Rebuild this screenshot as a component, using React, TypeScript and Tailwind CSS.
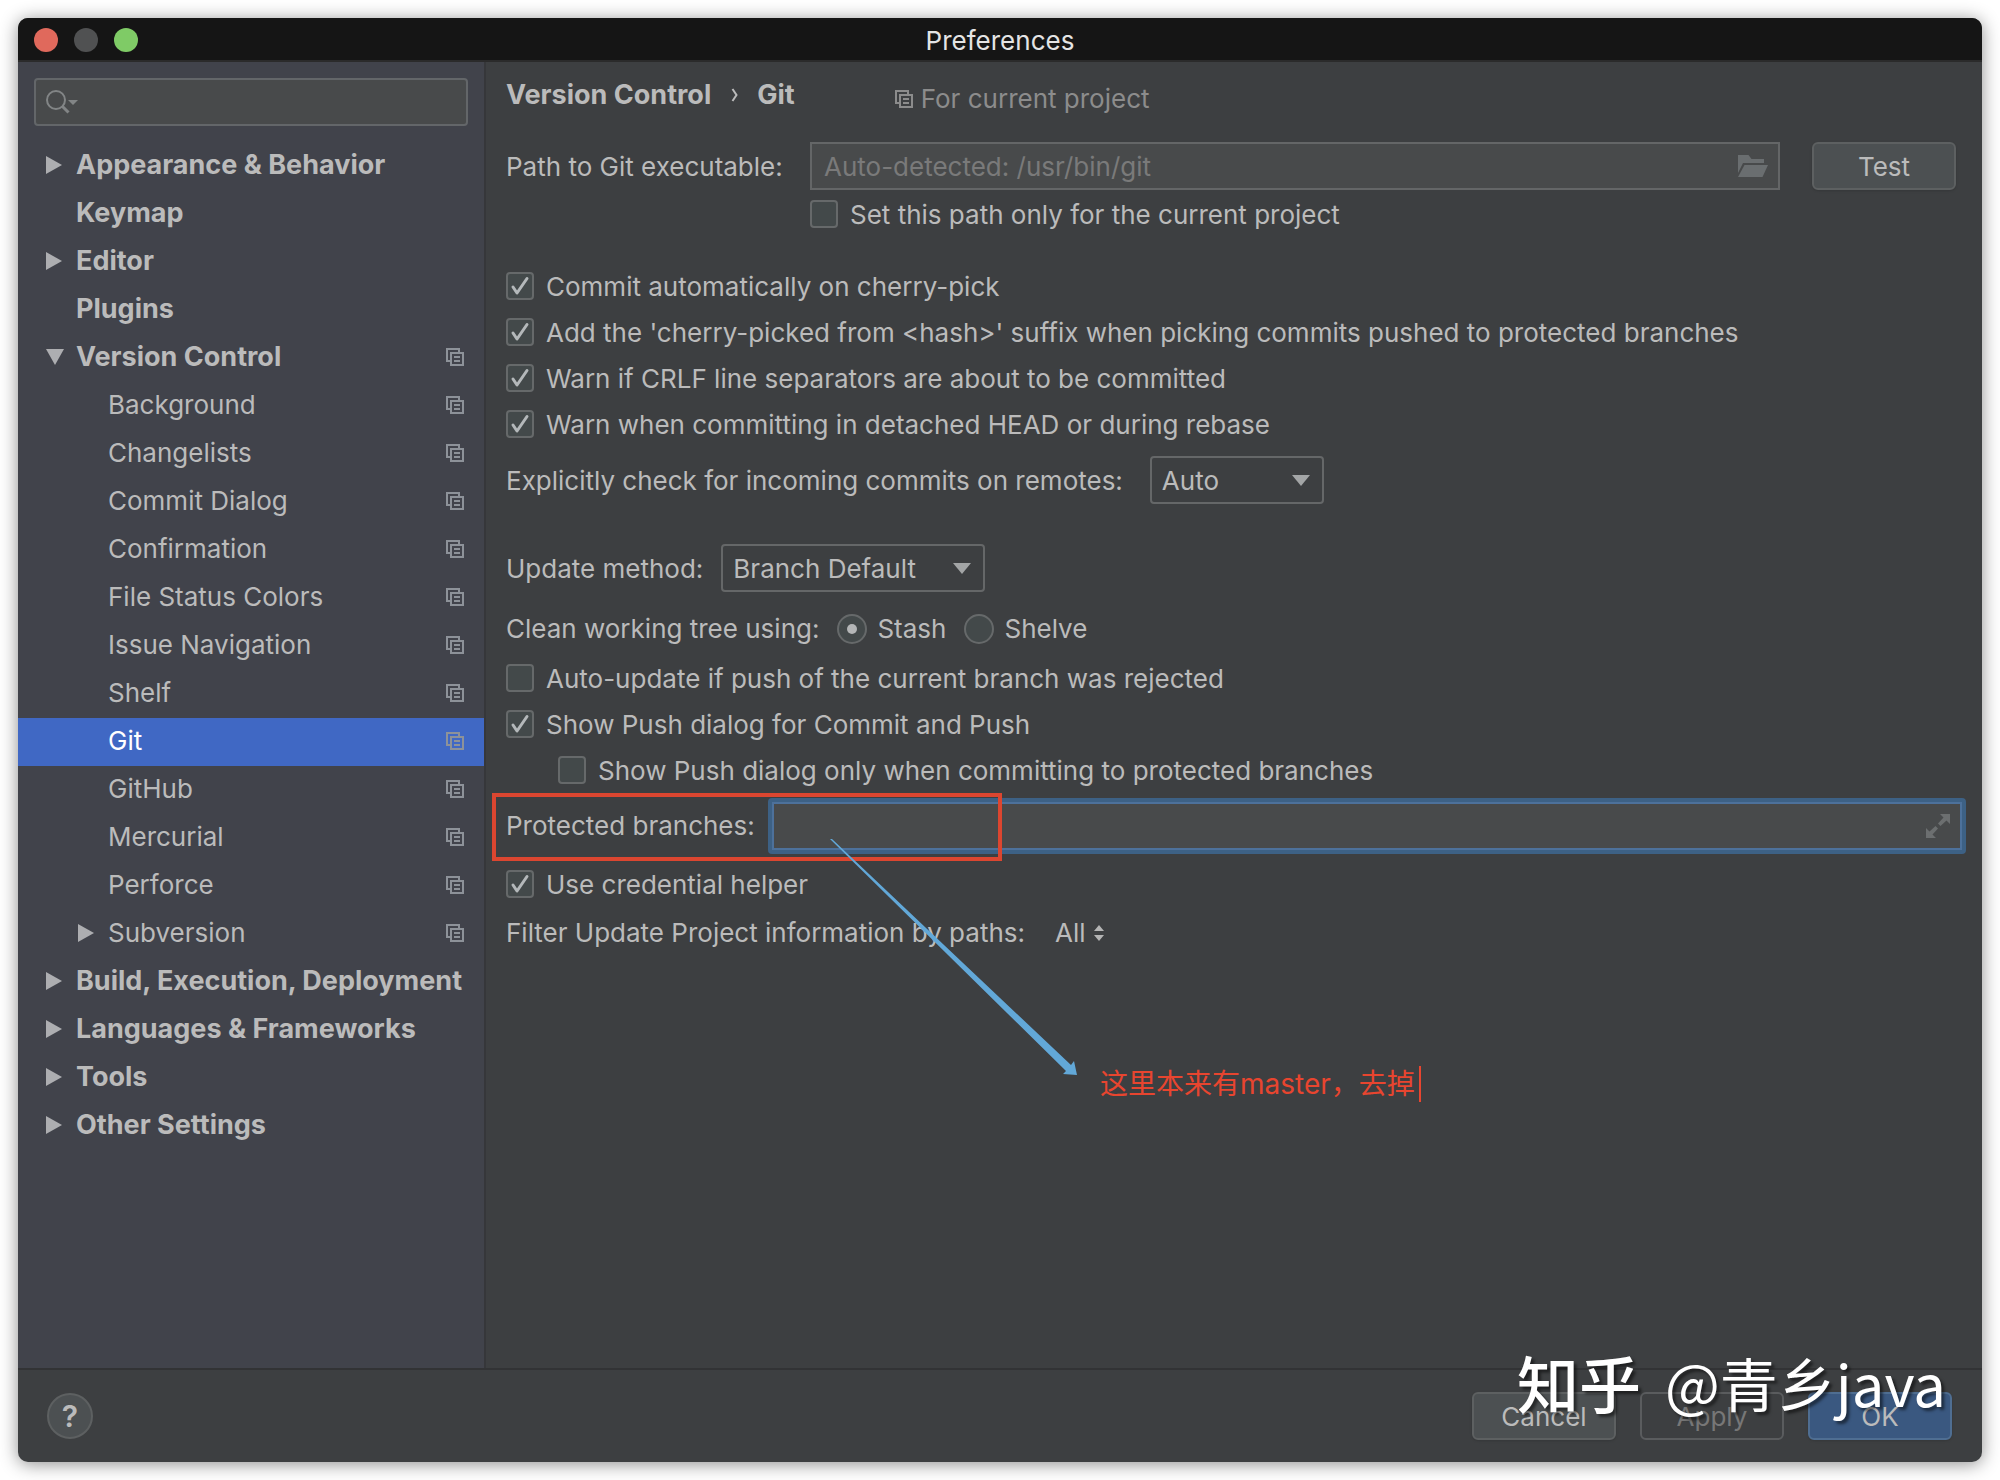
import React, { useState } from 'react';

interface TreeItem {
  label: string;
  level: 0 | 1;
  arrow?: 'open' | 'closed';
  perProject?: boolean;
}

const tree: TreeItem[] = [
  { label: 'Appearance & Behavior', level: 0, arrow: 'closed' },
  { label: 'Keymap', level: 0 },
  { label: 'Editor', level: 0, arrow: 'closed' },
  { label: 'Plugins', level: 0 },
  { label: 'Version Control', level: 0, arrow: 'open', perProject: true },
  { label: 'Background', level: 1, perProject: true },
  { label: 'Changelists', level: 1, perProject: true },
  { label: 'Commit Dialog', level: 1, perProject: true },
  { label: 'Confirmation', level: 1, perProject: true },
  { label: 'File Status Colors', level: 1, perProject: true },
  { label: 'Issue Navigation', level: 1, perProject: true },
  { label: 'Shelf', level: 1, perProject: true },
  { label: 'Git', level: 1, perProject: true },
  { label: 'GitHub', level: 1, perProject: true },
  { label: 'Mercurial', level: 1, perProject: true },
  { label: 'Perforce', level: 1, perProject: true },
  { label: 'Subversion', level: 1, arrow: 'closed', perProject: true },
  { label: 'Build, Execution, Deployment', level: 0, arrow: 'closed' },
  { label: 'Languages & Frameworks', level: 0, arrow: 'closed' },
  { label: 'Tools', level: 0, arrow: 'closed' },
  { label: 'Other Settings', level: 0, arrow: 'closed' },
];

const ProjectIcon = () => (
  <svg width="18" height="18" viewBox="0 0 18 18" fill="none" stroke="currentColor" strokeWidth="2" className="shrink-0">
    <path d="M4 13H1V1h12v3" />
    <path d="M5 5h12v12H5z" />
    <path d="M8 9h6M8 13h6" />
  </svg>
);

const TreeArrow = ({ kind }: { kind?: 'open' | 'closed' }) => (
  <svg width="18" height="18" viewBox="0 0 18 18" fill="currentColor" className="shrink-0 text-[#adaeb1]">
    {kind === 'closed' && <path d="M0 0l16 9-16 9z" />}
    {kind === 'open' && <path d="M0 1h18L9 17z" />}
  </svg>
);

interface CheckProps {
  label: string;
  checked?: boolean;
}

const Check: React.FC<CheckProps> = ({ label, checked = false }) => (
  <label className="flex h-[46px] items-center gap-3">
    <span className="grid shrink-0 place-items-center">
      <input
        type="checkbox"
        defaultChecked={checked}
        className="peer col-start-1 row-start-1 size-7 appearance-none rounded border-2 border-[#66696a] bg-[#43494a]"
      />
      <svg
        width="28"
        height="28"
        viewBox="0 0 28 28"
        fill="none"
        stroke="#b4b8ba"
        strokeWidth="3"
        strokeLinecap="round"
        strokeLinejoin="round"
        className="pointer-events-none invisible col-start-1 row-start-1 peer-checked:visible"
      >
        <path d="M7 15l4 6L21 6.500" />
      </svg>
    </span>
    <span className="pt-0.5">{label}</span>
  </label>
);

const Radio = ({ label, checked = false }: CheckProps) => (
  <label className="flex items-center gap-[10px]">
    <span className="grid place-items-center">
      <input
        type="radio"
        name="clean"
        defaultChecked={checked}
        className="peer col-start-1 row-start-1 size-[30px] appearance-none rounded-full border-2 border-[#66696a] bg-[#43494a]"
      />
      <span className="invisible col-start-1 row-start-1 size-[10px] rounded-full bg-[#b4b6b7] peer-checked:visible" />
    </span>
    {label}
  </label>
);

const Combo = ({ id, value, width }: { id: string; value: string; width: string }) => (
  <div className={`grid h-12 items-center ${width}`}>
    <select id={id} className="col-start-1 row-start-1 h-12 w-full appearance-none rounded border-2 border-[#656768] bg-[#3d3f41] pt-0.5 pl-[10px]">
      <option>{value}</option>
    </select>
    <svg width="18" height="12" viewBox="0 0 18 12" fill="#a3a5a6" className="pointer-events-none col-start-1 row-start-1 mr-[14px] justify-self-end">
      <path d="M0 1h18L9 12z" />
    </svg>
  </div>
);

export default function App() {
  const [selected, setSelected] = useState('Git');

  return (
    <div className="flex min-h-screen bg-white p-[18px] font-[Inter,'Noto_Sans_CJK_SC',sans-serif] text-[26px] leading-8 text-[#bbbbbb]">
      <div className="relative flex flex-1 flex-col overflow-hidden rounded-[10px] bg-[#3d3f41] shadow-[0_2px_18px_rgba(0,0,0,0.45)]">
        {/* Title bar */}
        <header className="grid h-11 grid-cols-[1fr_auto_1fr] items-center border-b-2 border-[#2b2b2b] bg-[#151515] px-4 pt-0.5">
          <div className="flex gap-4">
            <button aria-label="Close" className="size-6 rounded-full bg-[#e0695c]" />
            <button aria-label="Minimize" className="size-6 rounded-full bg-[#505152]" />
            <button aria-label="Zoom" className="size-6 rounded-full bg-[#7fcb66]" />
          </div>
          <h1 className="pt-0.5 text-[#e4e4e4]">Preferences</h1>
        </header>

        <div className="flex flex-1">
          {/* Sidebar */}
          <nav className="w-[468px] shrink-0 border-r-2 border-[#36373a] bg-[#41434b]">
            <div className="px-4 py-4">
              <label className="flex h-12 items-center gap-2 rounded border-2 border-[#636669] bg-[#484a4b] pl-[10px]">
                <svg width="32" height="24" viewBox="0 0 32 24" fill="none" className="shrink-0">
                  <circle cx="10" cy="10" r="9" stroke="#828586" strokeWidth="2" />
                  <path d="M16.500 16.500l6 6" stroke="#828586" strokeWidth="3" />
                  <path d="M22 10h10l-5 5z" fill="#828586" />
                </svg>
                <input type="text" aria-label="Search settings" className="min-w-0 flex-1 bg-transparent outline-none" />
              </label>
            </div>
            <ul>
              {tree.map((item) => (
                <li key={item.label}>
                  <button
                    onClick={() => setSelected(item.label)}
                    className={`flex h-12 w-full items-center gap-3 pr-5 pb-0.5 text-left whitespace-nowrap ${
                      item.level ? 'pl-[60px]' : 'pl-7 text-[27px] font-bold'
                    } ${item.label === selected ? 'bg-[#4068c4] text-white' : ''}`}
                  >
                    <TreeArrow kind={item.arrow} />
                    <span className="flex-1">{item.label}</span>
                    {item.perProject && (
                      <span className="text-[#8d9299]">
                        <ProjectIcon />
                      </span>
                    )}
                  </button>
                </li>
              ))}
            </ul>
          </nav>

          {/* Git page */}
          <main className="min-w-0 flex-1 pl-5">
            <div className="flex h-[66px] items-center">
              <h2 className="flex items-center text-[27px] font-bold">
                Version Control
                <svg width="8" height="14" viewBox="0 0 8 14" fill="none" stroke="currentColor" strokeWidth="2" className="mr-[18px] ml-5">
                  <path d="M1.500 1l4 6-4 6" />
                </svg>
                Git
              </h2>
              <div className="mt-2 ml-[100px] flex items-center gap-2 text-[#8c8c8c]">
                <ProjectIcon />
                For current project
              </div>
            </div>

            <div className="mt-[14px] grid grid-cols-[304px_1fr_auto] items-center pr-[26px]">
              <label htmlFor="path" className="pt-0.5">Path to Git executable:</label>
              <div className="flex h-12 items-center border-2 border-[#646667] bg-[#484a4b] pr-[10px] pl-3">
                <input
                  id="path"
                  type="text"
                  placeholder="Auto-detected: /usr/bin/git"
                  className="min-w-0 flex-1 bg-transparent pt-0.5 outline-none placeholder:text-[#7a7a7a]"
                />
                <svg width="30" height="22" viewBox="0 0 30 22" fill="#6a6e70">
                  <path d="M0 0h10.500l3 4H26v4H5L0 18z" />
                  <path d="M6.500 10H30l-5.500 12H0z" />
                </svg>
              </div>
              <button className="ml-8 h-12 w-36 rounded-md border-2 border-[#5d6061] bg-[#4c5052] pt-0.5 shadow">Test</button>
              <div className="col-start-2 flex h-12 items-center">
                <Check label="Set this path only for the current project" />
              </div>
            </div>

            <div className="mt-[25px]">
              <Check label="Commit automatically on cherry-pick" checked />
              <Check label="Add the 'cherry-picked from <hash>' suffix when picking commits pushed to protected branches" checked />
              <Check label="Warn if CRLF line separators are about to be committed" checked />
              <Check label="Warn when committing in detached HEAD or during rebase" checked />
            </div>

            <div className="mt-[9px] flex items-center gap-[27px]">
              <label htmlFor="incoming" className="pt-0.5">Explicitly check for incoming commits on remotes:</label>
              <Combo id="incoming" value="Auto" width="w-[174px]" />
            </div>

            <div className="mt-10 flex items-center gap-[18px]">
              <label htmlFor="update" className="pt-0.5">Update method:</label>
              <Combo id="update" value="Branch Default" width="w-[264px]" />
            </div>

            <div className="mt-[13px] flex h-12 items-center gap-[18px]">
              <span>Clean working tree using:</span>
              <Radio label="Stash" checked />
              <Radio label="Shelve" />
            </div>

            <div className="mt-0.5">
              <Check label="Auto-update if push of the current branch was rejected" />
              <Check label="Show Push dialog for Commit and Push" checked />
              <div className="pl-[52px]">
                <Check label="Show Push dialog only when committing to protected branches" />
              </div>
            </div>

            <div className="relative mt-[5px] flex items-center gap-[13px] pr-4">
              <label htmlFor="branches">Protected branches:</label>
              <div className="flex h-14 flex-1 items-center rounded border-4 border-[#3d6185] bg-[#484a4b] pr-[11px] outline-2 -outline-offset-6 outline-[#4d719b]">
                <input id="branches" type="text" className="min-w-0 flex-1 bg-transparent outline-none" />
                <svg width="26" height="26" viewBox="0 0 26 26" fill="#6c6f70">
                  <path d="M15 1h10v10l-3.500-3.500-6 5.500-2.500-2.500 5.500-6z" />
                  <path d="M11 25H1V15l3.500 3.500 6-5.500 2.500 2.500-5.500 6z" />
                </svg>
              </div>

              {/* Annotations drawn over the dialog */}
              <div className="pointer-events-none absolute -top-[5px] -left-[14px] h-[68px] w-[510px] border-4 border-[#dc4630]" />
              <svg width="250" height="240" viewBox="0 0 250 240" fill="#62a8d8" className="pointer-events-none absolute top-[41px] left-[324px]">
                <path d="M0 0L2 0 241 226 244 222 247 236 233 235 236 232z" />
              </svg>
              <div className="absolute top-[268px] left-[594px] border-r-2 border-[#e8452f] pr-1 text-[28px] leading-9 whitespace-nowrap text-[#e8452f]">
                这里本来有master，去掉
              </div>
            </div>

            <div className="mt-[7px]">
              <Check label="Use credential helper" checked />
            </div>

            <div className="flex h-[50px] items-center gap-[30px] pt-0.5">
              <label htmlFor="filter">Filter Update Project information by paths:</label>
              <div className="flex items-center gap-2">
                <select id="filter" className="appearance-none bg-transparent">
                  <option>All</option>
                </select>
                <svg width="10" height="16" viewBox="0 0 10 16" fill="#b4b4b4">
                  <path d="M0 6l5-6 5 6zM0 10l5 6 5-6z" />
                </svg>
              </div>
            </div>
          </main>
        </div>

        {/* Footer */}
        <footer className="flex h-[94px] items-center gap-6 border-t-2 border-[#323335] pr-[30px] pl-[29px]">
          <button aria-label="Help" className="mr-auto size-[46px] rounded-full border-2 border-[#5d6061] bg-[#4c5052] text-[30px] font-semibold">
            ?
          </button>
          <button className="h-12 w-36 rounded-md border-2 border-[#5d6061] bg-[#4c5052] pt-0.5 shadow">Cancel</button>
          <button disabled className="h-12 w-36 rounded-md border-2 border-[#5a5c5e] pt-0.5 text-[#777777]">
            Apply
          </button>
          <button className="h-12 w-36 rounded-md border-2 border-[#4f6e92] bg-[#3a5880] pt-0.5 shadow">OK</button>
        </footer>

        {/* Watermark */}
        <div className="pointer-events-none absolute right-9 bottom-11 flex items-center gap-6 font-['Noto_Sans_CJK_SC',sans-serif] text-[58px] leading-[72px] whitespace-nowrap text-white [text-shadow:3px_3px_3px_rgba(0,0,0,0.5)]">
          <span className="text-[62px] font-medium">知乎</span>
          <span>@青乡java</span>
        </div>
      </div>
    </div>
  );
}
